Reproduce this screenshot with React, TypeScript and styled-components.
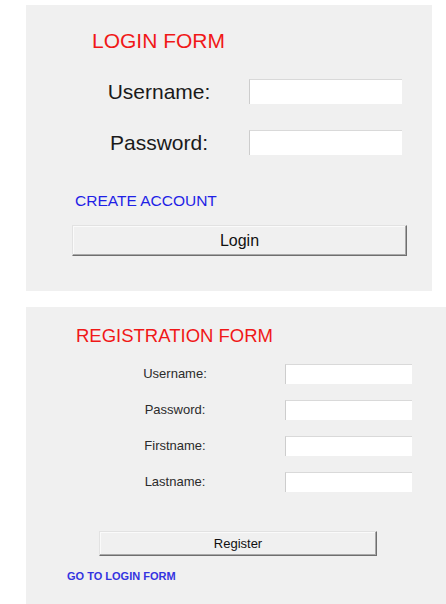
import React, {FC} from 'react';
import styled, {createGlobalStyle} from 'styled-components';

const GlobalStyle = createGlobalStyle`
  html, body {
    margin: 0;
    padding: 0;
    background: #ffffff;
    overflow: hidden;
  }
  body {
    font-family: 'Liberation Sans', Arial, sans-serif;
  }
`;

type Field = {label: string; name: string; type?: string};

const loginFields: Field[] = [
  {label: 'Username:', name: 'username'},
  {label: 'Password:', name: 'password', type: 'password'},
];

const registerFields: Field[] = [
  {label: 'Username:', name: 'username'},
  {label: 'Password:', name: 'password', type: 'password'},
  {label: 'Firstname:', name: 'firstname'},
  {label: 'Lastname:', name: 'lastname'},
];

const LoginPanel: FC = () => (
  <Panel width={406} height={286}>
    <LoginTitle>LOGIN FORM</LoginTitle>
    <LoginGrid>
      {loginFields.map((f) => (
        <React.Fragment key={f.name}>
          <LoginLabel htmlFor={`login-${f.name}`}>{f.label}</LoginLabel>
          <LoginInput id={`login-${f.name}`} name={f.name} type={f.type ?? 'text'} />
        </React.Fragment>
      ))}
    </LoginGrid>
    <CreateLink>CREATE ACCOUNT</CreateLink>
    <LoginButton>Login</LoginButton>
  </Panel>
);

const RegisterPanel: FC = () => (
  <Panel width={420} height={297}>
    <RegisterTitle>REGISTRATION FORM</RegisterTitle>
    <RegisterGrid>
      {registerFields.map((f) => (
        <React.Fragment key={f.name}>
          <RegisterLabel htmlFor={`reg-${f.name}`}>{f.label}</RegisterLabel>
          <RegisterInput id={`reg-${f.name}`} name={f.name} type={f.type ?? 'text'} />
        </React.Fragment>
      ))}
    </RegisterGrid>
    <RegisterButton>Register</RegisterButton>
    <BackLink>GO TO LOGIN FORM</BackLink>
  </Panel>
);

export default function App() {
  return (
    <>
      <GlobalStyle />
      <Page>
        <LoginPanel />
        <RegisterPanel />
      </Page>
    </>
  );
}

const Page = styled.div`
  display: flex;
  flex-direction: column;
  align-items: flex-start;
  gap: 16px;
  padding: 5px 0 0 26px;
`;

const Panel = styled.section<{width: number; height: number}>`
  box-sizing: border-box;
  width: ${(p) => p.width}px;
  height: ${(p) => p.height}px;
  background: #f0f0f0;
  display: flex;
  flex-direction: column;
  align-items: flex-start;
`;

const LoginTitle = styled.h1`
  margin: 24px 0 0 66px;
  font-size: 21px;
  line-height: 24px;
  font-weight: normal;
  color: #f01818;
`;

const RegisterTitle = styled.h2`
  margin: 18px 0 0 50px;
  font-size: 18.5px;
  line-height: 22px;
  font-weight: normal;
  color: #f01818;
`;

const LoginGrid = styled.div`
  margin: 26px 0 0 74px;
  display: grid;
  grid-template-columns: 118px 153px;
  grid-auto-rows: 25px;
  column-gap: 31px;
  row-gap: 26px;
  align-items: center;
`;

const RegisterGrid = styled.div`
  margin: 17px 0 0 99px;
  display: grid;
  grid-template-columns: 100px 127px;
  grid-auto-rows: 20px;
  column-gap: 60px;
  row-gap: 16px;
  align-items: center;
`;

const LoginLabel = styled.label`
  text-align: center;
  font-size: 21px;
  line-height: 25px;
  color: #1a1a1a;
  white-space: nowrap;
`;

const RegisterLabel = styled.label`
  text-align: center;
  font-size: 13px;
  line-height: 20px;
  color: #2b2b2b;
  white-space: nowrap;
`;

const FieldInput = styled.input`
  box-sizing: border-box;
  width: 100%;
  height: 100%;
  margin: 0;
  padding: 0 3px;
  background: #ffffff;
  border: none;
  border-top: 1px solid #d9d9d9;
  border-left: 1px solid #cdcdcd;
  outline: none;
  font-family: inherit;
`;

const LoginInput = styled(FieldInput)`
  font-size: 15px;
`;

const RegisterInput = styled(FieldInput)`
  font-size: 12px;
`;

const CreateLink = styled.a`
  margin: 37px 0 0 49px;
  font-size: 15.5px;
  line-height: 18px;
  color: #1f1fe6;
  cursor: pointer;
`;

const BackLink = styled.a`
  margin: 14px 0 0 41px;
  font-size: 11px;
  line-height: 13px;
  font-weight: bold;
  color: #3434e0;
  cursor: pointer;
`;

const RaisedButton = styled.button`
  box-sizing: border-box;
  padding: 0;
  background: #f0f0f0;
  border: 1px solid;
  border-color: #e2e2e2 #6f6f6f #6f6f6f #e2e2e2;
  box-shadow: inset -1px -1px 0 #a9a9a9, inset 1px 1px 0 #fafafa;
  font-family: inherit;
  color: #111111;
  cursor: pointer;
`;

const LoginButton = styled(RaisedButton)`
  margin: 15px 0 0 46px;
  width: 335px;
  height: 31px;
  font-size: 16px;
`;

const RegisterButton = styled(RaisedButton)`
  margin: 39px 0 0 73px;
  width: 278px;
  height: 25px;
  font-size: 13px;
`;
